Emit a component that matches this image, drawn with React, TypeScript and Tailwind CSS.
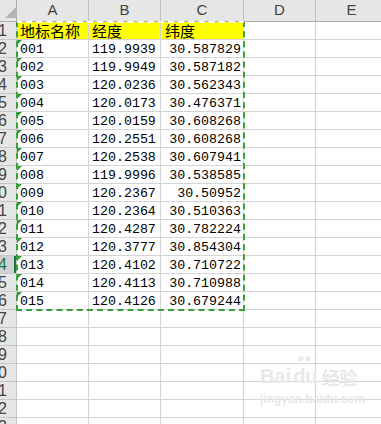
const rows: [string, string, string][] = [
  ["001", "119.9939", "30.587829"],
  ["002", "119.9949", "30.587182"],
  ["003", "120.0236", "30.562343"],
  ["004", "120.0173", "30.476371"],
  ["005", "120.0159", "30.608268"],
  ["006", "120.2551", "30.608268"],
  ["007", "120.2538", "30.607941"],
  ["008", "119.9996", "30.538585"],
  ["009", "120.2367", "30.50952"],
  ["010", "120.2364", "30.510363"],
  ["011", "120.4287", "30.782224"],
  ["012", "120.3777", "30.854304"],
  ["013", "120.4102", "30.710722"],
  ["014", "120.4113", "30.710988"],
  ["015", "120.4126", "30.679244"],
];

const cjk = { fontFamily: '"Noto Sans CJK SC", sans-serif' };
const mono = { fontFamily: '"Liberation Mono", monospace' };
const ui = { fontFamily: '"Liberation Sans", Arial, sans-serif' };

const cell = "relative h-[18px] border-r border-b border-[#d4d4d4] overflow-hidden";
const totalRows = 23;

function RowHead({ n, active }: { n: number; active?: boolean }) {
  return (
    <div
      className={`relative h-[18px] border-r border-b border-[#c6c6c6] overflow-hidden ${
        active ? "bg-[#d2d2d2]" : "bg-[#e6e6e6]"
      }`}
    >
      <div
        className={`absolute right-[9px] top-0 text-[16px] leading-[18px] whitespace-nowrap ${
          active ? "text-[#217346]" : "text-[#444]"
        }`}
        style={ui}
      >
        {n}
      </div>
      {active && <div className="absolute right-0 top-0 h-full w-[2px] bg-[#217346]" />}
    </div>
  );
}

function Flag() {
  return (
    <div className="absolute left-0 top-0 h-0 w-0 border-t-[5px] border-r-[5px] border-t-[#2f9a2f] border-r-transparent" />
  );
}

export default function App() {
  const cols = ["A", "B", "C", "D", "E"];
  return (
    <div className="relative h-[424px] w-[381px] overflow-hidden bg-white">
      <div className="grid grid-cols-[17px_72px_72px_83px_72px_72px]">
        {/* header row */}
        <div className="relative h-[22px] border-r border-b border-[#ababab] bg-[#e6e6e6]">
          <div className="absolute left-[5px] top-[6px] h-0 w-0 border-b-[12px] border-l-[12px] border-b-[#b4b4b4] border-l-transparent" />
        </div>
        {cols.map((c) => (
          <div
            key={c}
            className="flex h-[22px] items-center justify-center border-r border-b border-r-[#bdbdbd] border-b-[#ababab] bg-[#e6e6e6] text-[15px] text-[#444]"
            style={ui}
          >
            {c}
          </div>
        ))}

        {/* row 1 */}
        <RowHead n={1} />
        <div className={`${cell} bg-[#ffff00] pl-[3px] text-[15px] leading-[18px] text-black`} style={cjk}>
          地标名称
        </div>
        <div className={`${cell} bg-[#ffff00] pl-[3px] text-[15px] leading-[18px] text-black`} style={cjk}>
          经度
        </div>
        <div className={`${cell} bg-[#ffff00] pl-[4px] text-[15px] leading-[18px] text-black`} style={cjk}>
          纬度
        </div>
        <div className={cell} />
        <div className={cell} />

        {rows.map(([id, lng, lat], i) => (
          <div key={id} className="contents">
            <RowHead n={i + 2} active={i + 2 === 14} />
            <div className={`${cell} pl-[3px] text-[13.3px] leading-[19px] text-black`} style={mono}>
              <Flag />
              {id}
            </div>
            <div className={`${cell} pl-[3px] text-[13.3px] leading-[19px] text-black`} style={mono}>
              {lng}
            </div>
            <div className={`${cell} pr-[2px] text-right text-[13.3px] leading-[19px] text-black`} style={mono}>
              {lat}
            </div>
            <div className={cell} />
            <div className={cell} />
          </div>
        ))}

        {Array.from({ length: totalRows - 16 }, (_, k) => (
          <div key={k} className="contents">
            <RowHead n={k + 17} />
            <div className={cell} />
            <div className={cell} />
            <div className={cell} />
            <div className={cell} />
            <div className={cell} />
          </div>
        ))}
      </div>

      {/* copy marquee */}
      <div className="pointer-events-none absolute left-[16px] top-[21px] h-[290px] w-[229px] border-2 border-dashed border-[#3aa03a] border-t-white" />

      {/* watermark */}
      <div className="pointer-events-none absolute left-[260px] top-[366px] select-none text-[#e8e8e8]" style={ui}>
        <div className="flex items-end gap-[2px] text-[20px] font-bold leading-none">
          <span>Bai</span>
          <span className="relative">
            <span className="absolute -top-[14px] left-[4px] text-[12px]">●●</span>
            du
          </span>
          <span className="ml-[2px] text-[18px]" style={cjk}>
            经验
          </span>
        </div>
        <div className="mt-[4px] text-[12px] font-bold">jingyan.baidu.com</div>
      </div>
    </div>
  );
}
